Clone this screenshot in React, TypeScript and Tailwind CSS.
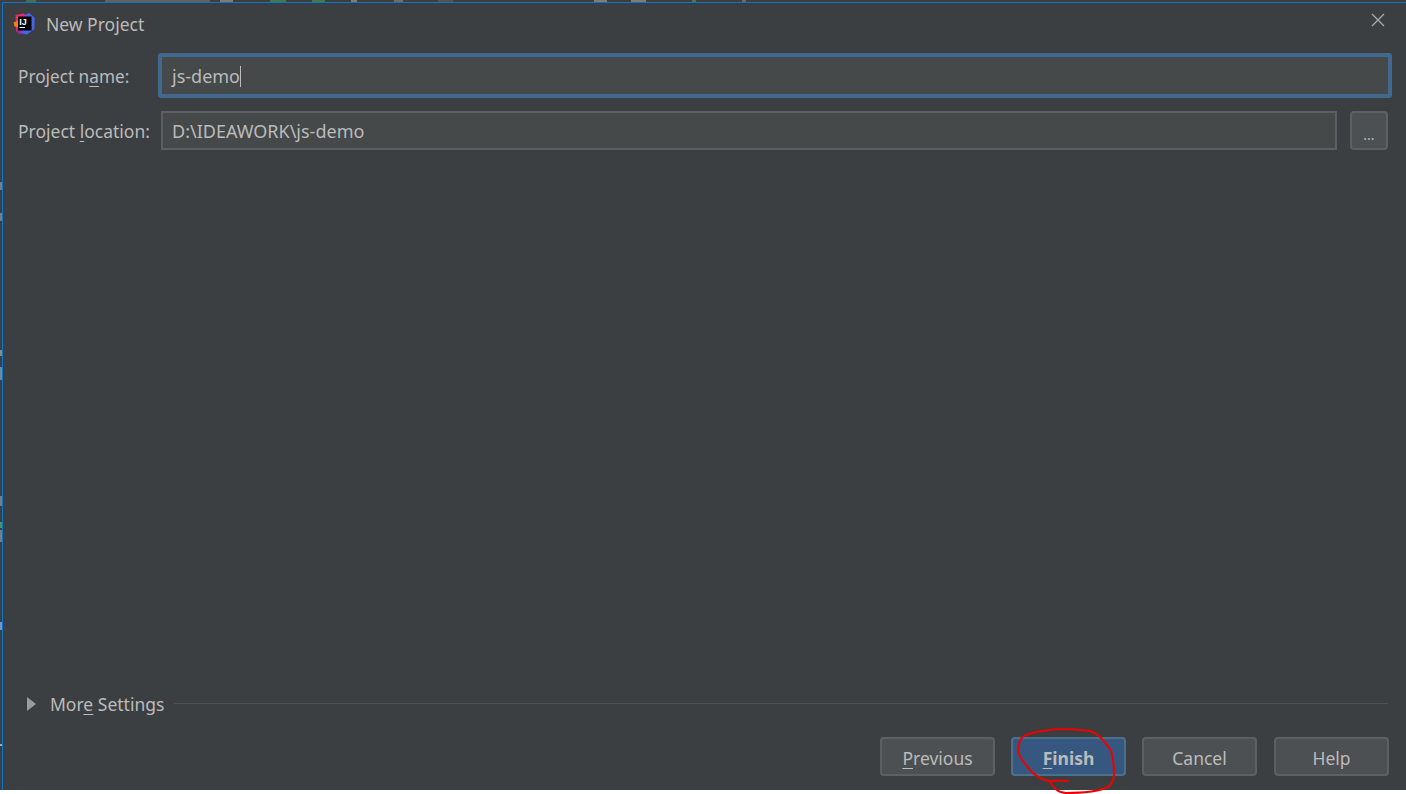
import { useState } from "react";

const font = "font-['Noto_Sans','Liberation_Sans',sans-serif]";

// bits of the window behind the dialog that show through at the edges
const topBits = [
  { left: 26, width: 10, color: "#3f7050" },
  { left: 105, width: 105, color: "#5f6264" },
  { left: 220, width: 13, color: "#7a7c7d" },
  { left: 270, width: 16, color: "#3c7a50" },
  { left: 312, width: 13, color: "#3c7a50" },
  { left: 351, width: 6, color: "#7a7c7d" },
  { left: 394, width: 9, color: "#6a6c6d" },
  { left: 438, width: 15, color: "#505457" },
  { left: 594, width: 13, color: "#7a7c7d" },
  { left: 631, width: 15, color: "#7a7c7d" },
  { left: 692, width: 4, color: "#3c7a50" },
  { left: 742, width: 4, color: "#6a6c6d" },
];
const leftBits = [
  { top: 182, height: 8, color: "#7a7c7d" },
  { top: 213, height: 8, color: "#7a7c7d" },
  { top: 350, height: 6, color: "#8f8a70" },
  { top: 367, height: 13, color: "#6a8aa8" },
  { top: 496, height: 10, color: "#7a7c7d" },
  { top: 522, height: 6, color: "#4c9a50" },
  { top: 530, height: 12, color: "#7a7c7d" },
  { top: 622, height: 8, color: "#6a9ac8" },
  { top: 744, height: 2, color: "#8ab0d0" },
];

function IdeaLogo() {
  return (
    <svg width="22" height="22" viewBox="0 0 22 22" className="shrink-0">
      <path d="M2.5 2 L11 0.5 L14 5 L7 20 L3 18 Z" fill="#ef2a6e" />
      <path d="M0.5 9.5 L5 7.5 L6 14.5 L1.5 13.5 Z" fill="#f97a12" />
      <path d="M12 2 L16 0 L21.5 4.5 L21.5 16 L14 21.5 L6 20 Z" fill="#4a62ea" />
      <path d="M3.5 15 L8 15 L8 21 L4.5 20 Z" fill="#a3269c" />
      <rect x="5" y="3.5" width="13.5" height="14" fill="#000000" />
      <text x="6.2" y="11.5" fontSize="9" fontWeight="700" fill="#ffffff" fontFamily="'Liberation Sans',sans-serif">
        IJ
      </text>
      <rect x="6.5" y="14" width="5.5" height="1" fill="#ffffff" />
    </svg>
  );
}

function Mnemonic({ before, letter, after }: { before: string; letter: string; after: string }) {
  return (
    <>
      {before}
      <span className="underline underline-offset-[3px] decoration-1">{letter}</span>
      {after}
    </>
  );
}

function DialogButton({ primary, className, children }: { primary?: boolean; className?: string; children: React.ReactNode }) {
  return (
    <button
      className={`h-[39px] w-[115px] rounded-[4px] border-2 pt-[4px] text-[17.5px] leading-none ${
        primary
          ? "border-[#4c708c] bg-[#365880] font-bold text-[#bbbbbb]"
          : "border-[#5e6060] bg-[#4c5052] text-[#bbbbbb]"
      } ${className ?? ""}`}
    >
      {children}
    </button>
  );
}

export default function App() {
  const [name] = useState("js-demo");

  return (
    <div className={`relative h-[794px] w-[1406px] overflow-hidden bg-white ${font}`}>
      <div className="flex h-[790px] flex-col bg-[#3c3f41] pl-[2px] pt-[2px]">
        <div className="flex min-h-0 flex-1 flex-col border-l border-t border-[#0f74c8]">
          {/* Title bar */}
          <div className="flex h-[38px] shrink-0 items-center pl-[10px] pr-[21px] pt-[4px]">
            <IdeaLogo />
            <span className="ml-[11px] text-[17.5px] text-[#bbbbbb]">New Project</span>
            <svg width="14" height="14" viewBox="0 0 14 14" className="ml-auto -mt-[8px]">
              <path d="M1 1 L13 13 M13 1 L1 13" stroke="#a9abac" strokeWidth="1.3" />
            </svg>
          </div>

          {/* Project name */}
          <div className="mt-[12px] flex h-[45px] shrink-0 items-center pl-[15px] pr-[14px]">
            <label className="w-[140px] shrink-0 pt-[2px] text-[17.2px] text-[#bbbbbb]">
              <Mnemonic before="Project n" letter="a" after="me:" />
            </label>
            <div className="flex h-[45px] flex-1 items-center rounded-[3px] border-[4px] border-[#41688f] bg-[#45494a] pl-[10px] pt-[2px] text-[18px] text-[#bbbbbb]">
              {name}
              <span className="h-[21px] w-px bg-[#bbbbbb]" />
            </div>
          </div>

          {/* Project location */}
          <div className="mt-[13px] flex h-[39px] shrink-0 items-center pl-[15px] pr-[18px]">
            <label className="w-[143px] shrink-0 pt-[2px] text-[17.5px] text-[#bbbbbb]">
              <Mnemonic before="Project " letter="l" after="ocation:" />
            </label>
            <div className="flex h-[39px] flex-1 items-center border-2 border-[#5c5e5f] bg-[#45494a] pl-[9px] pt-[2px] text-[18px] text-[#bbbbbb]">
              D:\IDEAWORK\js-demo
            </div>
            <button className="ml-[13px] flex h-[39px] w-[38px] shrink-0 items-end justify-center rounded-[4px] border-2 border-[#5e6060] bg-[#4c5052] pb-[6px] text-[14px] leading-none text-[#bbbbbb]">
              ...
            </button>
          </div>

          <div className="flex-1" />

          {/* More Settings */}
          <div className="flex h-[24px] shrink-0 items-center pl-[24px] pr-[18px]">
            <svg width="9" height="14" viewBox="0 0 9 14" className="mt-[1px] shrink-0">
              <path d="M0 0 L9 7 L0 14 Z" fill="#9a9c9e" />
            </svg>
            <span className="ml-[14px] pt-[2px] text-[17.5px] text-[#bbbbbb]">
              <Mnemonic before="Mor" letter="e" after=" Settings" />
            </span>
            <div className="ml-[10px] h-px flex-1 bg-[#515151]" />
          </div>

          {/* Footer buttons */}
          <div className="mt-[22px] mb-[14px] flex shrink-0 justify-end gap-[16px] pr-[17px]">
            <DialogButton>
              <Mnemonic before="" letter="P" after="revious" />
            </DialogButton>
            <DialogButton primary>
              <Mnemonic before="" letter="F" after="inish" />
            </DialogButton>
            <DialogButton>Cancel</DialogButton>
            <DialogButton className="ml-px">Help</DialogButton>
          </div>
        </div>
      </div>

      {/* Window behind the dialog, showing at the top and left edges */}
      {topBits.map((b) => (
        <div key={b.left} className="absolute top-0 h-[2px]" style={{ left: b.left, width: b.width, backgroundColor: b.color }} />
      ))}
      {leftBits.map((b) => (
        <div key={b.top} className="absolute left-0 w-[2px]" style={{ top: b.top, height: b.height, backgroundColor: b.color }} />
      ))}

      {/* Red hand-drawn circle around Finish */}
      <svg className="pointer-events-none absolute left-0 top-0" width="1406" height="794" viewBox="0 0 1406 794" fill="none">
        <path
          d="M1068 781 C1060 780 1056 781 1050 781 C1042 780 1036 777 1030 770 C1024 762 1019 758 1018.5 752 C1018 744 1019 739 1024 736 C1030 733 1036 732 1042 731 C1052 729 1070 728 1090 731 C1098 733 1104 741 1110 749 C1114 756 1114 768 1114 776 C1113 783 1110 787 1105 788 C1096 792 1080 793 1066 793 C1058 793 1054 788 1050 782"
          stroke="#f00000"
          strokeWidth="2"
          strokeLinecap="round"
          strokeLinejoin="round"
        />
      </svg>
    </div>
  );
}
